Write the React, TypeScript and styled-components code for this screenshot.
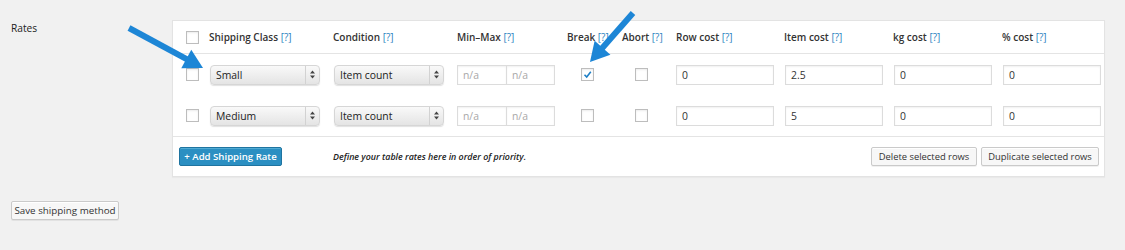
import styled, { createGlobalStyle } from 'styled-components'

type Rate = {
  shippingClass: string
  condition: string
  breakChecked: boolean
  rowCost: string
  itemCost: string
  kgCost: string
  percentCost: string
}

const rates: Rate[] = [
  { shippingClass: 'Small', condition: 'Item count', breakChecked: true, rowCost: '0', itemCost: '2.5', kgCost: '0', percentCost: '0' },
  { shippingClass: 'Medium', condition: 'Item count', breakChecked: false, rowCost: '0', itemCost: '5', kgCost: '0', percentCost: '0' },
]

const headers = ['Shipping Class', 'Condition', 'Min–Max', 'Break', 'Abort', 'Row cost', 'Item cost', 'kg cost', '% cost']

const GlobalStyle = createGlobalStyle`
  body {
    margin: 0;
    background: #f1f1f1;
    font-family: "Open Sans", "Liberation Sans", sans-serif;
    color: #444;
  }
`

const Page = styled.div`
  position: relative;
  width: 1125px;
  height: 250px;
  overflow: hidden;
`

const FieldRow = styled.div`
  display: flex;
  padding-top: 20px;
`

const Label = styled.div`
  width: 172px;
  box-sizing: border-box;
  padding-left: 11px;
  font-size: 10.2px;
  line-height: 16px;
  color: #222;
`

const Panel = styled.div`
  width: 933px;
  box-sizing: border-box;
  background: #fff;
  border: 1px solid #e3e3e3;
  box-shadow: 0 1px 1px rgba(0, 0, 0, 0.03);
`

const Grid = styled.div<{ $height: number; $border?: boolean }>`
  display: grid;
  grid-template-columns: 25px 124px 124px 110px 55px 54px 108px 109px 109px 99px;
  align-items: center;
  height: ${(p) => p.$height}px;
  padding-left: 11px;
  border-bottom: ${(p) => (p.$border ? '1px solid #e4e4e4' : 'none')};
`

const HeadCell = styled.div`
  font-size: 10px;
  font-weight: 600;
  color: #333;
  white-space: nowrap;
  padding-bottom: 1px;
`

const Help = styled.span`
  font-weight: 400;
  color: #2a82c0;
`

const Cell = styled.div<{ $pad?: number }>`
  display: flex;
  align-items: center;
  padding-left: ${(p) => p.$pad ?? 0}px;
`

const Check = styled.span<{ $ml?: number }>`
  display: inline-flex;
  align-items: center;
  justify-content: center;
  width: 11px;
  height: 11px;
  margin-left: ${(p) => p.$ml ?? 0}px;
  border: 1px solid #bdbdbd;
  background: #fff;
  box-shadow: inset 0 1px 2px rgba(0, 0, 0, 0.08);
`

const Select = styled.div`
  display: flex;
  align-items: center;
  width: 110px;
  height: 20px;
  box-sizing: border-box;
  margin-left: 1px;
  border: 1px solid #d6d6d6;
  border-radius: 4px;
  background: linear-gradient(#f9f9f9, #e4e4e4);
  box-shadow: 0 1px 1px rgba(0, 0, 0, 0.12);
  font-size: 10.4px;
  color: #222;
`

const SelectText = styled.span`
  flex: 1;
  padding-left: 5px;
`

const SelectArrows = styled.span`
  display: flex;
  align-items: center;
  justify-content: center;
  width: 13px;
  height: 100%;
  border-left: 1px solid #d2d2d2;
`

const Input = styled.div<{ $width: number; $joined?: boolean; $muted?: boolean }>`
  display: flex;
  align-items: center;
  width: ${(p) => p.$width}px;
  height: 20px;
  box-sizing: border-box;
  margin-left: ${(p) => (p.$joined ? -1 : 0)}px;
  padding-left: 5px;
  border: 1px solid #dcdcdc;
  background: #fff;
  box-shadow: inset 0 1px 2px rgba(0, 0, 0, 0.06);
  font-size: 10.4px;
  color: ${(p) => (p.$muted ? '#a8a8a8' : '#333')};
`

const Footer = styled.div`
  display: flex;
  align-items: center;
  height: 39px;
  padding: 0 5px 0 6px;
`

const PrimaryButton = styled.div`
  display: flex;
  align-items: center;
  justify-content: center;
  width: 103px;
  height: 19px;
  box-sizing: border-box;
  border: 1px solid #1f74a0;
  border-radius: 2px;
  background: #2b8fc2;
  box-shadow: inset 0 1px 0 rgba(120, 200, 230, 0.5);
  color: #fff;
  font-size: 9.6px;
  font-weight: 600;
`

const Note = styled.div`
  margin-left: 51px;
  font-size: 8.9px;
  font-style: italic;
  font-weight: 600;
  color: #222;
`

const Actions = styled.div`
  display: flex;
  gap: 4px;
  margin-left: auto;
`

const Button = styled.div<{ $width: number }>`
  display: flex;
  align-items: center;
  justify-content: center;
  width: ${(p) => p.$width}px;
  height: 19px;
  box-sizing: border-box;
  border: 1px solid #cacaca;
  border-radius: 2px;
  background: #f7f7f7;
  box-shadow: inset 0 1px 0 #fff, 0 1px 0 rgba(0, 0, 0, 0.06);
  font-size: 9.4px;
  color: #333;
  white-space: nowrap;
`

const SaveButton = styled(Button)`
  margin: 24px 0 0 11px;
  font-size: 9.8px;
`

const Overlay = styled.svg`
  position: absolute;
  left: 0;
  top: 0;
  pointer-events: none;
`

function UpDown() {
  return (
    <svg width="5" height="9" viewBox="0 0 5 9">
      <path d="M2.5 0.5 L5 3.5 H0 Z M2.5 8.5 L5 5.5 H0 Z" fill="#444" />
    </svg>
  )
}

function Tick() {
  return (
    <svg width="9" height="9" viewBox="0 0 9 9">
      <path d="M1.5 4.8 L3.7 7 L7.8 1.8" fill="none" stroke="#1e7fc6" strokeWidth="1.6" />
    </svg>
  )
}

function Arrow(props: { from: [number, number]; to: [number, number] }) {
  const [x1, y1] = props.from
  const [x2, y2] = props.to
  const len = Math.hypot(x2 - x1, y2 - y1)
  const ux = (x2 - x1) / len
  const uy = (y2 - y1) / len
  const bx = x2 - ux * 19
  const by = y2 - uy * 19
  const px = -uy * 10.5
  const py = ux * 10.5
  return (
    <g fill="#1d86d6" stroke="#1d86d6">
      <line x1={x1} y1={y1} x2={bx + ux * 2} y2={by + uy * 2} strokeWidth="6" />
      <polygon
        points={`${x2},${y2} ${bx + px},${by + py} ${bx - px},${by - py}`}
        strokeWidth="0"
      />
    </g>
  )
}

function Dropdown(props: { value: string }) {
  return (
    <Select>
      <SelectText>{props.value}</SelectText>
      <SelectArrows>
        <UpDown />
      </SelectArrows>
    </Select>
  )
}

export default function App() {
  return (
    <Page>
      <GlobalStyle />
      <FieldRow>
        <Label>Rates</Label>
        <Panel>
          <Grid $height={32} $border>
            <Cell>
              <Check $ml={2} />
            </Cell>
            {headers.map((h) => (
              <HeadCell key={h}>
                {h} <Help>[?]</Help>
              </HeadCell>
            ))}
          </Grid>
          {rates.map((r, i) => (
            <Grid key={i} $height={41} $border={i === rates.length - 1}>
              <Cell>
                <Check $ml={2} />
              </Cell>
              <Cell>
                <Dropdown value={r.shippingClass} />
              </Cell>
              <Cell>
                <Dropdown value={r.condition} />
              </Cell>
              <Cell>
                <Input $width={50} $muted>n/a</Input>
                <Input $width={49} $joined $muted>n/a</Input>
              </Cell>
              <Cell $pad={14}>
                <Check>{r.breakChecked && <Tick />}</Check>
              </Cell>
              <Cell $pad={13}>
                <Check />
              </Cell>
              <Cell>
                <Input $width={98}>{r.rowCost}</Input>
              </Cell>
              <Cell $pad={1}>
                <Input $width={98}>{r.itemCost}</Input>
              </Cell>
              <Cell $pad={1}>
                <Input $width={98}>{r.kgCost}</Input>
              </Cell>
              <Cell $pad={1}>
                <Input $width={98}>{r.percentCost}</Input>
              </Cell>
            </Grid>
          ))}
          <Footer>
            <PrimaryButton>+ Add Shipping Rate</PrimaryButton>
            <Note>Define your table rates here in order of priority.</Note>
            <Actions>
              <Button $width={106}>Delete selected rows</Button>
              <Button $width={118}>Duplicate selected rows</Button>
            </Actions>
          </Footer>
        </Panel>
      </FieldRow>
      <SaveButton $width={108}>Save shipping method</SaveButton>
      <Overlay width="1125" height="250" viewBox="0 0 1125 250">
        <Arrow from={[129, 28]} to={[203, 68]} />
        <Arrow from={[633, 13]} to={[590, 62]} />
      </Overlay>
    </Page>
  )
}
